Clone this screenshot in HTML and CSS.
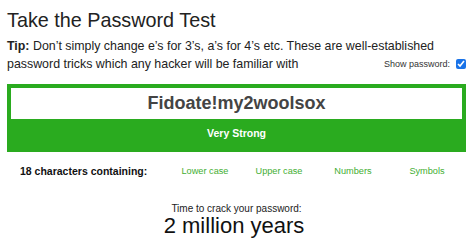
FILE: index.html
```html
<!DOCTYPE html>
<html>
<head>
<meta charset="utf-8">
<link rel="stylesheet" href="styles.css">
</head>
<body>
<div class="page">
  <h1 class="title">Take the Password Test</h1>
  <p class="tip"><b>Tip:</b> Don’t simply change e’s for 3’s, a’s for 4’s etc. These are well-established password tricks which any hacker will be familiar with<label class="show"><span>Show password:</span><input type="checkbox" checked></label></p>
  <div class="meter">
    <div class="pw">Fidoate!my2woolsox</div>
    <div class="strength">Very Strong</div>
  </div>
  <div class="stats">
    <div class="count">18 characters containing:</div>
    <div class="kind">Lower case</div>
    <div class="kind">Upper case</div>
    <div class="kind">Numbers</div>
    <div class="kind">Symbols</div>
  </div>
  <div class="crack">
    <div class="crack-label">Time to crack your password:</div>
    <div class="crack-time">2 million years</div>
  </div>
</div>
</body>
</html>
```
FILE: styles.css
```css
html, body {
  margin: 0;
  padding: 0;
  background: #fff;
}
body {
  font-family: "Liberation Sans", Arial, sans-serif;
  color: #222;
}
.page {
  padding: 0 8px 0 7px;
}
.title {
  margin: 8px 0 0;
  font-size: 19.8px;
  line-height: 24px;
  font-weight: normal;
  color: #222;
}
.tip {
  margin: 5px 0 0;
  font-size: 12.4px;
  line-height: 18px;
}
.show {
  float: right;
  display: flex;
  align-items: center;
  gap: 6px;
  font-size: 9px;
  color: #333;
  height: 18px;
}
.show input {
  width: 10px;
  height: 10px;
  margin: 0;
  accent-color: #1a73e8;
}
.meter {
  margin-top: 11px;
  border: 4px solid #2aab1f;
  background: #2aab1f;
}
.pw {
  background: #fff;
  height: 31px;
  line-height: 31px;
  text-align: center;
  font-size: 18px;
  font-weight: bold;
  color: #444;
}
.strength {
  height: 29px;
  line-height: 29px;
  text-align: center;
  color: #fff;
  font-size: 10.5px;
  font-weight: bold;
}
.stats {
  margin-top: 12px;
  padding-left: 13px;
  display: grid;
  grid-template-columns: 148px repeat(4, 74px);
  line-height: 14px;
  align-items: center;
}
.count {
  font-size: 10.5px;
  font-weight: bold;
  color: #111;
}
.kind {
  text-align: center;
  font-size: 9.2px;
  color: #3fae32;
}
.crack {
  margin-top: 25px;
  text-align: center;
}
.crack-label {
  font-size: 10px;
  line-height: 12px;
}
.crack-time {
  font-size: 22px;
  line-height: 24px;
  margin-top: -1px;
  padding-right: 5px;
  color: #111;
}
```
